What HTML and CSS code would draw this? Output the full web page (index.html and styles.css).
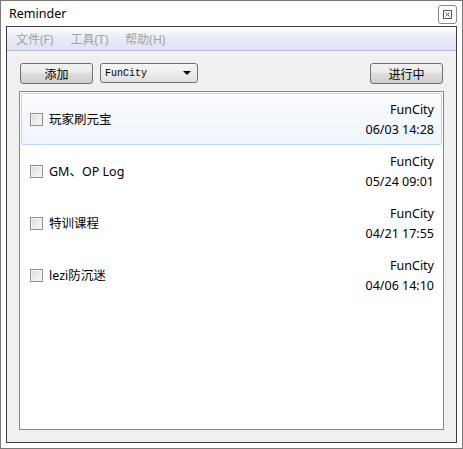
FILE: index.html
```html
<!DOCTYPE html>
<html>
<head>
<meta charset="utf-8">
<link rel="stylesheet" href="styles.css">
</head>
<body>
<div class="window">
  <div class="titlebar">
    <span class="title">Reminder</span>
    <span class="close">
      <svg width="9" height="9" viewBox="0 0 9 9"><rect x="0.5" y="0.5" width="8" height="8" fill="none" stroke="#555" stroke-width="1"/><path d="M2.5 2.5 L6.5 6.5 M6.5 2.5 L2.5 6.5" stroke="#555" stroke-width="1"/></svg>
    </span>
  </div>
  <div class="client">
    <div class="menubar">
      <span class="menu-item">文件(F)</span>
      <span class="menu-item">工具(T)</span>
      <span class="menu-item">帮助(H)</span>
    </div>
    <div class="toolbar">
      <button class="btn">添加</button>
      <div class="combo"><span class="combo-text">FunCity</span><span class="combo-arrow"></span></div>
      <span class="spacer"></span>
      <button class="btn">进行中</button>
    </div>
    <div class="list">
      <div class="row selected">
        <span class="check"></span><span class="name">玩家刷元宝</span>
        <div class="meta"><span>FunCity</span><span>06/03 14:28</span></div>
      </div>
      <div class="row">
        <span class="check"></span><span class="name">GM、OP Log</span>
        <div class="meta"><span>FunCity</span><span>05/24 09:01</span></div>
      </div>
      <div class="row">
        <span class="check"></span><span class="name">特训课程</span>
        <div class="meta"><span>FunCity</span><span>04/21 17:55</span></div>
      </div>
      <div class="row">
        <span class="check"></span><span class="name">lezi防沉迷</span>
        <div class="meta"><span>FunCity</span><span>04/06 14:10</span></div>
      </div>
    </div>
  </div>
</div>
</body>
</html>
```
FILE: styles.css
```css
* { box-sizing: border-box; }
html, body { margin: 0; padding: 0; background: #fff; }
body {
  font-family: "Noto Sans", "Noto Sans CJK SC", sans-serif;
  font-size: 12px;
  color: #000;
}
.window {
  width: 463px;
  height: 449px;
  border: 1px solid #787878;
  background: #fff;
  padding: 0 5px 5px 5px;
  display: flex;
  flex-direction: column;
}
.titlebar {
  height: 25px;
  flex-shrink: 0;
  display: flex;
  align-items: flex-start;
  justify-content: space-between;
  padding-left: 3px;
}
.title {
  font-size: 12.5px;
  color: #000;
  margin-top: 4px;
}
.close {
  flex-shrink: 0;
  width: 19px;
  height: 19px;
  border: 1px solid #8a8a8a;
  border-radius: 3px;
  display: flex;
  align-items: center;
  justify-content: center;
  margin-top: 4px;
  background: #fff;
}
.client {
  flex: 1;
  border: 1px solid #3e3e3e;
  background: #f0f0f0;
  display: flex;
  flex-direction: column;
}
.menubar {
  height: 24px;
  flex-shrink: 0;
  border-bottom: 1px solid #b6bdd2;
  background: linear-gradient(#fdfdfe 0%, #e9edf7 45%, #dce3f3 100%);
  display: flex;
  align-items: center;
  padding-left: 9px;
  gap: 17px;
}
.menu-item {
  color: #a3a3a3;
  font-size: 12px;
}
.toolbar {
  display: flex;
  flex-shrink: 0;
  align-items: flex-start;
  padding: 12px 13px 0 13px;
  height: 40px;
}
.btn {
  width: 73px;
  height: 21px;
  border: 1px solid #707070;
  border-radius: 3px;
  background: linear-gradient(#f2f2f2 0%, #ebebeb 45%, #dddddd 50%, #cfcfcf 100%);
  font-family: "Noto Sans CJK SC", sans-serif;
  font-size: 12px;
  color: #000;
  padding: 0;
  line-height: 19px;
}
.combo {
  margin-left: 7px;
  width: 98px;
  height: 20px;
  border: 1px solid #707070;
  border-radius: 3px;
  background: linear-gradient(#f6f6f6 0%, #ececec 50%, #e0e0e0 100%);
  display: flex;
  align-items: center;
  padding: 0 0 0 4px;
}
.combo-text {
  font-family: "Liberation Mono", monospace;
  font-size: 10px;
  flex: 1;
}
.combo-arrow {
  width: 0;
  height: 0;
  border-left: 4px solid transparent;
  border-right: 4px solid transparent;
  border-top: 4px solid #000;
  margin-right: 6px;
}
.spacer { flex: 1; }
.list {
  flex: 1;
  margin: 0 12px 12px 12px;
  border: 1px solid #828790;
  background: #fff;
  padding: 1px;
  display: flex;
  flex-direction: column;
}
.row {
  height: 52px;
  flex-shrink: 0;
  display: flex;
  align-items: center;
  padding: 0 7px 0 8px;
  border: 1px solid transparent;
  border-radius: 2px;
}
.row.selected {
  border-color: #b9d7fa;
  background: linear-gradient(#fafcff 0%, #eef5fd 100%);
}
.check {
  width: 13px;
  height: 13px;
  border: 1px solid #8e8f8f;
  background: linear-gradient(135deg, #dcdcdc 0%, #eeeeee 60%, #f8f8f8 100%);
  box-shadow: inset 0 0 0 1px #f4f4f4;
  margin-right: 6px;
  margin-top: 1px;
}
.name {
  flex: 1;
  font-size: 12.5px;
  margin-top: -2px;
}
.meta {
  display: flex;
  flex-direction: column;
  align-items: flex-end;
  gap: 2px;
  line-height: 18px;
  font-size: 12.5px;
  margin-top: 1px;
}
```
